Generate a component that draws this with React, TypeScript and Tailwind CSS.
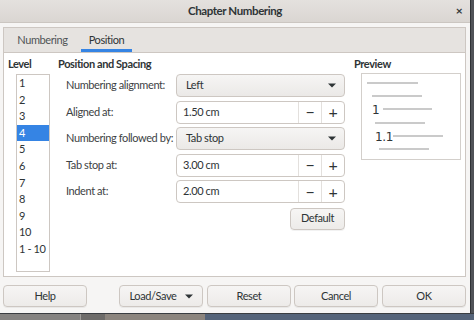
import React from "react";

const font = { fontFamily: 'Lato, "Liberation Sans", sans-serif' };

const Btn = ({ children, className = "" }: { children: React.ReactNode; className?: string }) => (
  <div
    className={`h-[22px] flex items-center justify-center rounded-[4px] border border-[#cdc7c2] bg-gradient-to-b from-[#f6f5f4] to-[#edebe9] text-[11px] text-[#2e3436] shadow-[0_1px_0_rgba(0,0,0,0.05)] ${className}`}
  >
    {children}
  </div>
);

const Caret = () => (
  <svg width="8" height="5" viewBox="0 0 8 5" className="shrink-0">
    <path d="M0 0.5 L8 0.5 L4 4.5 Z" fill="#2e3436" />
  </svg>
);

const Dropdown = ({ value }: { value: string }) => (
  <div className="h-[23px] w-[169px] flex items-center justify-between pl-[9px] pr-[8px] rounded-[4px] border border-[#cdc7c2] bg-gradient-to-b from-[#f6f5f4] to-[#ebe9e7] text-[#2e3436]">
    <span>{value}</span>
    <Caret />
  </div>
);

const Spin = ({ value }: { value: string }) => (
  <div className="h-[23px] w-[169px] flex items-stretch rounded-[4px] border border-[#cdc7c2] bg-white text-[#2e3436]">
    <div className="flex-1 flex items-center pl-[6px]">{value}</div>
    <div className="w-[23px] flex items-center justify-center border-l border-[#e3e0dd] text-[16px] leading-none">−</div>
    <div className="w-[23px] flex items-center justify-center border-l border-[#e3e0dd] text-[16px] leading-none">+</div>
  </div>
);

const rows: { label: string; control: React.ReactNode }[] = [
  { label: "Numbering alignment:", control: <Dropdown value="Left" /> },
  { label: "Aligned at:", control: <Spin value="1.50 cm" /> },
  { label: "Numbering followed by:", control: <Dropdown value="Tab stop" /> },
  { label: "Tab stop at:", control: <Spin value="3.00 cm" /> },
  { label: "Indent at:", control: <Spin value="2.00 cm" /> },
];

const levels = ["1", "2", "3", "4", "5", "6", "7", "8", "9", "10", "1 - 10"];

export default function App() {
  return (
    <div className="w-[474px] h-[320px] flex flex-col overflow-hidden bg-[#4a4d52] tracking-[-0.4px]" style={font}>
      <div className="flex h-[313px]">
        {/* dialog */}
        <div className="w-[470px] h-full flex flex-col bg-[#f6f5f4]">
          {/* title bar */}
          <div className="h-[23px] flex items-center bg-gradient-to-b from-[#e4e1de] to-[#dad6d2] border-b border-[#cbc6c1]">
            <div className="w-[22px]" />
            <div className="flex-1 text-center text-[11.5px] font-bold text-[#2e3436]">Chapter Numbering</div>
            <div className="w-[22px] flex items-center justify-center text-[12px] font-bold text-[#2e3436]">×</div>
          </div>

          {/* notebook */}
          <div className="mt-[4px] mx-[3px] w-[463px] h-[250px] flex flex-col border border-[#cdc7c2]">
            <div className="h-[25px] flex bg-[#e6e3e0] border-b border-[#cdc7c2] text-[11px] text-[#4f5456]">
              <div className="w-[77px] flex items-center justify-center">Numbering</div>
              <div className="w-[51px] flex items-center justify-center text-[#2e3436] border-b-[3px] border-[#3584e4] pt-[3px]">
                Position
              </div>
            </div>
            <div className="flex-1 bg-white flex pt-[4px] text-[11px] text-[#2e3436] whitespace-nowrap">
              {/* level column */}
              <div className="w-[54px] pl-[4px] flex flex-col">
                <div className="h-[14px] leading-[14px] font-bold">Level</div>
                <div className="mt-[3px] ml-[8px] w-[34px] h-[198px] border border-[#cdc7c2] flex flex-col">
                  {levels.map((l) => (
                    <div
                      key={l}
                      className={`h-[16.6px] flex items-center pl-[2px] ${l === "4" ? "bg-[#3584e4] text-white" : ""}`}
                    >
                      {l}
                    </div>
                  ))}
                </div>
              </div>

              {/* position and spacing */}
              <div className="w-[296px] flex flex-col">
                <div className="h-[14px] leading-[14px] font-bold">Position and Spacing</div>
                <div className="mt-[3px] pl-[8px] flex flex-col gap-[3.5px]">
                  {rows.map((r) => (
                    <div key={r.label} className="flex items-center">
                      <div className="w-[110px] text-[#3d4244]">{r.label}</div>
                      {r.control}
                    </div>
                  ))}
                  <div className="flex justify-end w-[279px] mt-[1px]">
                    <Btn className="w-[55px]">Default</Btn>
                  </div>
                </div>
              </div>

              {/* preview */}
              <div className="flex-1 flex flex-col">
                <div className="h-[14px] leading-[14px] font-bold">Preview</div>
                <div className="mt-[2px] ml-[7px] w-[100px] h-[87px] border border-[#d3cfcb] bg-white">
                  <svg width="98" height="85" viewBox="0 0 98 85">
                    <g stroke="#b9b9b9" strokeWidth="1.3">
                      <line x1="5" y1="9" x2="56" y2="9" />
                      <line x1="10" y1="22" x2="60" y2="22" />
                      <line x1="21" y1="35" x2="70" y2="35" />
                      <line x1="13" y1="49" x2="63" y2="49" />
                      <line x1="31" y1="62" x2="81" y2="62" />
                      <line x1="17" y1="75" x2="67" y2="75" />
                    </g>
                    <text x="10" y="40" fontSize="12" fill="#2e3436" fontFamily="DejaVu Sans, sans-serif">1</text>
                    <text x="13" y="67" fontSize="12" fill="#2e3436" fontFamily="DejaVu Sans, sans-serif">1.1</text>
                  </svg>
                </div>
              </div>
            </div>
          </div>

          {/* buttons */}
          <div className="mt-[8px] px-[3px] flex">
            <Btn className="w-[84px]">Help</Btn>
            <Btn className="w-[84px] ml-[32px] gap-[8px]">
              <span>Load/Save</span>
              <Caret />
            </Btn>
            <Btn className="w-[84px] ml-[4px]">Reset</Btn>
            <Btn className="w-[84px] ml-[3px]">Cancel</Btn>
            <Btn className="w-[84px] ml-[4px]">OK</Btn>
          </div>
        </div>
        {/* background right edge */}
        <div className="flex-1 bg-[#505358] border-l border-[#2f3236]" />
      </div>
      {/* background bottom edge */}
      <div className="flex-1 flex border-t border-[#3a3d41]">
        <div className="w-[80px] bg-[#858381]" />
        <div className="w-[25px] bg-[#6e6c6a] border-l border-[#a09e9b]" />
        <div className="w-[100px] bg-[#8c857e]" />
        <div className="flex-1 bg-[#55647a]" />
      </div>
    </div>
  );
}
